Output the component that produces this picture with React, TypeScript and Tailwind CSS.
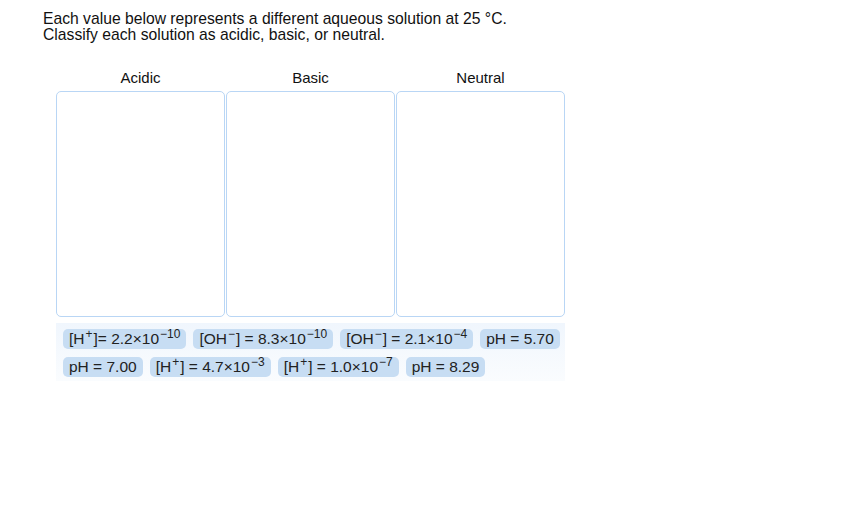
const bins = ["Acidic", "Basic", "Neutral"];

// ion charge sits close over the symbol, exponents get a little air
const Sup = ({ children, exp }: { children: React.ReactNode; exp?: boolean }) => (
  <sup className={exp ? "text-[12px] leading-none top-[-0.5em] ml-[1px]" : "text-[12px] leading-none top-[-0.5em] mx-[1px]"}>
    {children}
  </sup>
);

const Chip = ({ children }: { children: React.ReactNode }) => (
  <div className="bg-[#c7ddf3] rounded-[5px] px-[6px] pt-[1px] pb-[2px] text-[15.5px] leading-[17px] text-[#222] whitespace-nowrap">
    {children}
  </div>
);

const App = () => {
  return (
    <div
      className="w-[862px] h-[510px] bg-white text-[#111] pl-[43px] pt-[11px]"
      style={{ fontFamily: '"Liberation Sans", Arial, sans-serif' }}
    >
      <p className="text-[15.7px] leading-[16px]">
        Each value below represents a different aqueous solution at 25 °C.
        <br />
        Classify each solution as acidic, basic, or neutral.
      </p>

      <div className="ml-[13px] mt-[27px] flex gap-[1px]">
        {bins.map((b) => (
          <div key={b} className="w-[169px] flex flex-col">
            <div className="text-center text-[15px] leading-[16px] h-[21px]">{b}</div>
            <div className="h-[226px] border border-[#b9d6f5] rounded-[5px] bg-white" />
          </div>
        ))}
      </div>

      <div className="ml-[13px] mt-[6px] w-[509px] h-[58px] bg-gradient-to-b from-[#f0f6fd] to-[#fafcfe] pl-[7px] pt-[6px] flex flex-wrap items-start gap-x-[7px] gap-y-[3px]">
        <Chip>
          [H<Sup>+</Sup>]= 2.2×10<Sup exp>−10</Sup>
        </Chip>
        <Chip>
          [OH<Sup>−</Sup>] = 8.3×10<Sup exp>−10</Sup>
        </Chip>
        <Chip>
          [OH<Sup>−</Sup>] = 2.1×10<Sup exp>−4</Sup>
        </Chip>
        <Chip>pH = 5.70</Chip>
        <Chip>pH = 7.00</Chip>
        <Chip>
          [H<Sup>+</Sup>] = 4.7×10<Sup exp>−3</Sup>
        </Chip>
        <Chip>
          [H<Sup>+</Sup>] = 1.0×10<Sup exp>−7</Sup>
        </Chip>
        <Chip>pH = 8.29</Chip>
      </div>
    </div>
  );
};

export default App;
